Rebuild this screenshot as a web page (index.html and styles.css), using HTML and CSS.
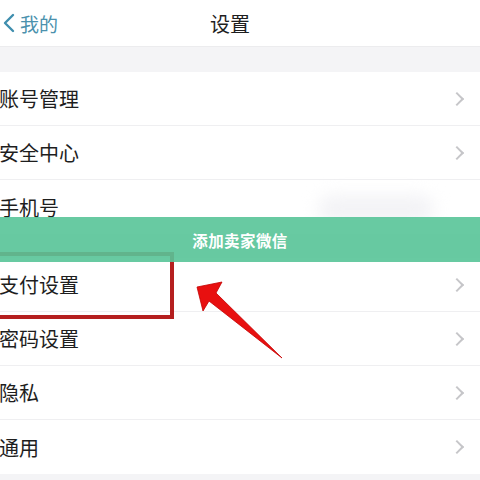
FILE: index.html
```html
<!DOCTYPE html>
<html lang="zh">
<head>
<meta charset="utf-8">
<link rel="stylesheet" href="styles.css">
</head>
<body>
<div class="screen">
  <header class="nav">
    <div class="back">
      <svg class="back-icon" width="12" height="20" viewBox="0 0 12 20"><polyline points="10,2 2,10 10,18" fill="none" stroke="#3f8eae" stroke-width="2.4" stroke-linecap="round" stroke-linejoin="round"/></svg>
      <span>我的</span>
    </div>
    <div class="title">设置</div>
    <div></div>
  </header>
  <div class="band band-top"></div>
  <div class="group">
    <div class="row"><span class="label">账号管理</span><span class="chev"></span></div>
    <div class="row"><span class="label">安全中心</span><span class="chev"></span></div>
    <div class="row"><span class="label">手机号</span><span class="blur"></span></div>
  </div>
  <div class="band band-mid"></div>
  <div class="group">
    <div class="row"><span class="label">支付设置</span><span class="chev"></span></div>
    <div class="row"><span class="label">密码设置</span><span class="chev"></span></div>
    <div class="row"><span class="label">隐私</span><span class="chev"></span></div>
    <div class="row"><span class="label">通用</span><span class="chev"></span></div>
  </div>
  <div class="band band-bottom"></div>

  <div class="redbox"></div>
  <div class="banner">添加卖家微信</div>
  <svg class="arrow" width="480" height="480" viewBox="0 0 480 480">
    <polygon points="197,287 222,282 216,293 282,358 209,301 203,311" fill="#e81010" stroke="#c40000" stroke-width="0.8" stroke-linejoin="round"/>
  </svg>
</div>
</body>
</html>
```
FILE: styles.css
```css
* { box-sizing: border-box; }
html, body { margin: 0; padding: 0; background: #ffffff; }
body { font-family: "Noto Sans CJK SC", "Noto Sans", sans-serif; }
.screen { position: relative; width: 480px; height: 480px; overflow: hidden; background: #fff; }
.nav {
  height: 47px;
  display: grid;
  grid-template-columns: 1fr auto 1fr;
  align-items: center;
  padding-right: 20px;
  border-bottom: 1px solid #ececee;
  background: #fff;
}
.back { display: flex; align-items: center; gap: 5px; padding-left: 3px; color: #4b91ad; font-size: 19px; }
.back-icon { display: block; }
.title { font-size: 20px; color: #1e1e1e; }
.band { background: #f4f4f6; }
.band-top { height: 25px; }
.band-mid { height: 24px; }
.band-bottom { height: 20px; }
.group { background: #fff; }
.row {
  height: 54px;
  display: flex;
  align-items: center;
  justify-content: space-between;
  padding-right: 14px;
  border-bottom: 1.5px solid #efeff1;
}
.group .row:last-child { border-bottom: none; }
.label { font-size: 20px; color: #1e1e1e; margin-left: -1px; }
.chev {
  width: 10px; height: 10px;
  border-top: 2px solid #c6c6c9;
  border-right: 2px solid #c6c6c9;
  transform: rotate(45deg);
  margin-right: 4px;
}
.blur {
  width: 116px; height: 28px;
  margin-right: 32px;
  margin-top: 4px;
  background: #f3f3f6;
  border-radius: 14px;
  filter: blur(8px);
}
.banner {
  position: absolute; left: 0; top: 217px; width: 480px; height: 45px;
  background: rgba(88, 196, 152, 0.9);
  color: #fff; font-size: 15.5px; font-weight: 700; letter-spacing: 0.4px;
  display: flex; align-items: center; justify-content: center;
}
.redbox {
  position: absolute; left: -12px; top: 252px; width: 186px; height: 67px;
  border: 4px solid #b51f1f;
}
.arrow { position: absolute; left: 0; top: 0; }
```
